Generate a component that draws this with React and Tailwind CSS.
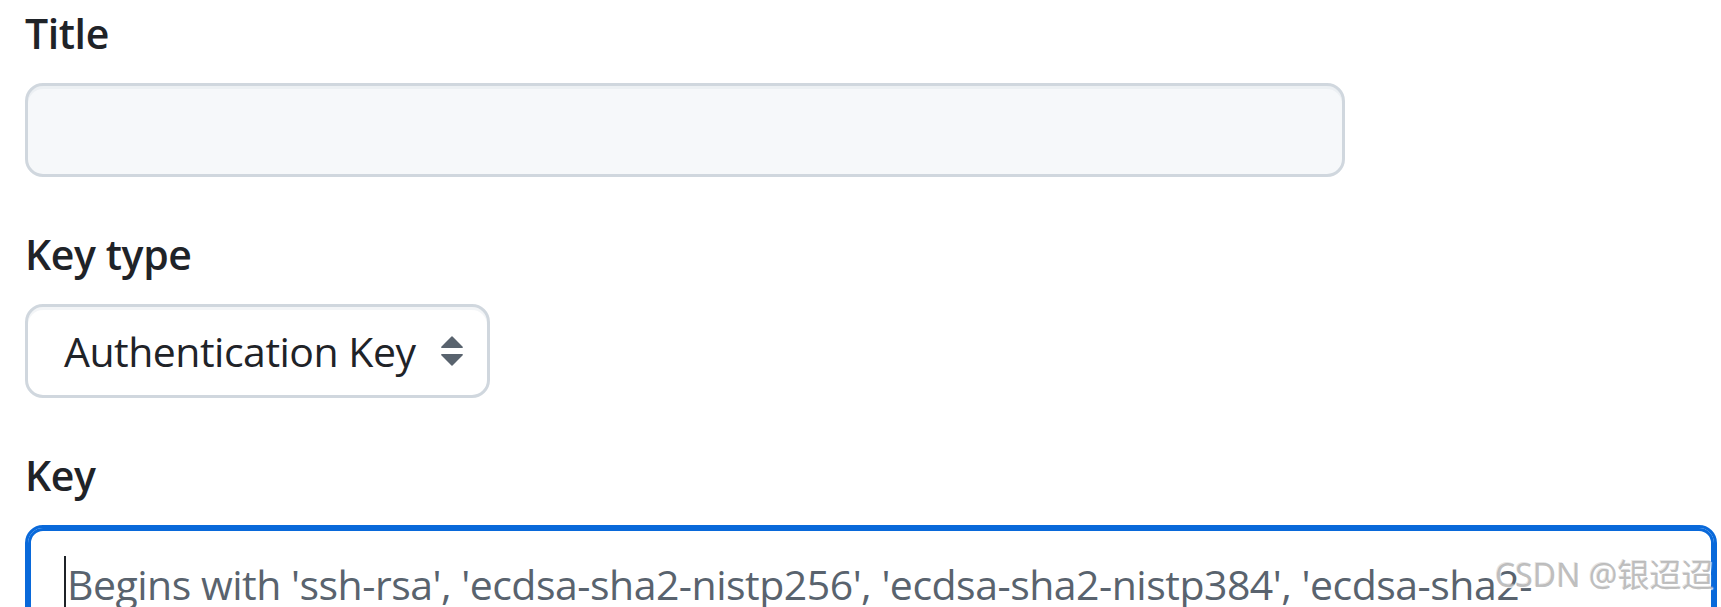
import React from "react";

function SelectArrows() {
  return (
    <svg width="48" height="48" viewBox="0 0 16 16" fill="#59636e" aria-hidden="true">
      <path d="M4.427 9.427l3.396 3.396a.25.25 0 00.354 0l3.396-3.396A.25.25 0 0011.396 9H4.604a.25.25 0 00-.177.427zM4.427 6.573l3.396-3.396a.25.25 0 01.354 0l3.396 3.396A.25.25 0 0111.396 7H4.604a.25.25 0 01-.177-.427z" />
    </svg>
  );
}

export default function App() {
  return (
    <div className="relative h-[607px] w-[1721px] overflow-hidden bg-white font-['Open_Sans',sans-serif] text-[#1f2328]">
      <div className="flex flex-col pl-[25px] pt-[2px]">
        <label className="block text-[41px] font-semibold leading-[63px] tracking-[-0.4px]">Title</label>
        <div className="mt-[18px] h-[94px] w-[1320px] rounded-[18px] border-[3px] border-[#d0d7de] bg-[#f6f8fa] shadow-[inset_0_3px_0_rgba(208,215,222,0.25)]" />

        <label className="mt-[46px] block text-[41px] font-semibold leading-[63px] tracking-[-0.4px]">Key type</label>
        <div className="mt-[18px] flex h-[94px] w-[465px] items-center justify-between rounded-[18px] border-[3px] border-[#d0d7de] bg-white pl-[36px] pr-[11px] shadow-[inset_0_3px_0_rgba(208,215,222,0.25)]">
          <span className="whitespace-nowrap text-[41px] leading-[60px] tracking-[-0.5px]">Authentication Key</span>
          <SelectArrows />
        </div>

        <label className="mt-[46px] block text-[41px] font-semibold leading-[63px] tracking-[-0.4px]">Key</label>
        <div className="mt-[18px] h-[300px] w-[1692px] rounded-[18px] border-[3px] border-[#0969da] bg-white pl-[36px] pr-[36px] pt-[26px] shadow-[inset_0_0_0_3px_#0969da]">
          <div className="relative whitespace-nowrap text-[41px] leading-[60px] tracking-[-0.5px] text-[#59636e]">
            <span className="absolute left-0 top-[2px] h-[56px] w-[2px] bg-[#1f2328]" />
            <span className="pl-[3px]">Begins with 'ssh-rsa', 'ecdsa-sha2-nistp256', 'ecdsa-sha2-nistp384', 'ecdsa-sha2-</span>
          </div>
          <div className="whitespace-nowrap text-[41px] leading-[60px] tracking-[-0.5px] text-[#59636e]">
            nistp521', 'ssh-ed25519', 'sk-ecdsa-sha2-nistp256@openssh.com', or 'sk-ssh-ed25519@openssh.com'
          </div>
        </div>
      </div>

      <div className="pointer-events-none absolute left-[1495px] top-[555px] whitespace-nowrap font-['Noto_Sans','Noto_Sans_CJK_SC',sans-serif] text-[32px] leading-[40px] text-[rgba(175,175,175,0.8)] [text-shadow:1px_1px_1px_rgba(255,255,255,0.9),-1px_-1px_0_rgba(120,120,120,0.2)]">
        CSDN @银迢迢
      </div>
    </div>
  );
}
